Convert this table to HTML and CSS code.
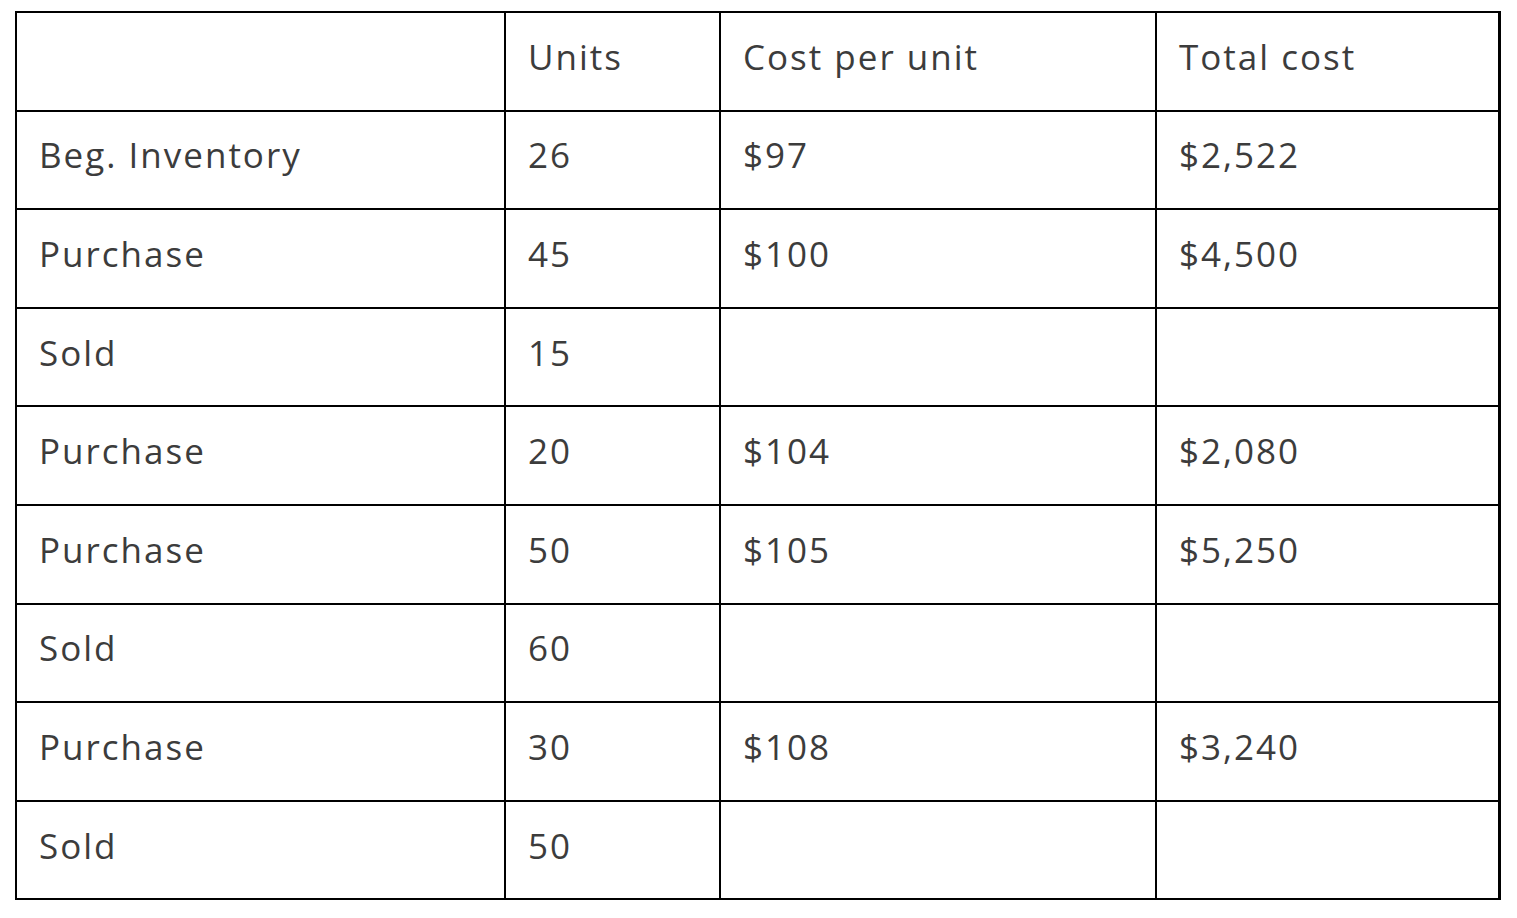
FILE: index.html
```html
<!DOCTYPE html>
<html>
<head>
<meta charset="utf-8">
<link rel="stylesheet" href="styles.css">
</head>
<body>
<table class="inv">
  <colgroup>
    <col class="c1"><col class="c2"><col class="c3"><col class="c4">
  </colgroup>
  <tr><td></td><td>Units</td><td>Cost per unit</td><td>Total cost</td></tr>
  <tr><td>Beg. Inventory</td><td>26</td><td>$97</td><td>$2,522</td></tr>
  <tr><td>Purchase</td><td>45</td><td>$100</td><td>$4,500</td></tr>
  <tr><td>Sold</td><td>15</td><td></td><td></td></tr>
  <tr><td>Purchase</td><td>20</td><td>$104</td><td>$2,080</td></tr>
  <tr><td>Purchase</td><td>50</td><td>$105</td><td>$5,250</td></tr>
  <tr><td>Sold</td><td>60</td><td></td><td></td></tr>
  <tr><td>Purchase</td><td>30</td><td>$108</td><td>$3,240</td></tr>
  <tr><td>Sold</td><td>50</td><td></td><td></td></tr>
</table>
</body>
</html>
```

FILE: styles.css
```css
html, body {
  margin: 0;
  padding: 0;
  background: #fff;
}
.inv {
  margin: 11px 0 0 15px;
  border-collapse: collapse;
  table-layout: fixed;
  width: 1483px;
  font-family: "Open Sans", Lato, sans-serif;
  font-size: 35px;
  letter-spacing: 2px;
  color: #3c3c3c;
}
.c1 { width: 489px; }
.c2 { width: 215px; }
.c3 { width: 436px; }
.c4 { width: 343px; }
.inv tr { height: 98.6px; }
.inv td {
  border: 2px solid #000;
  padding: 0 0 10px 22px;
  vertical-align: middle;
  white-space: nowrap;
}
.inv td:last-child {
  border-right-width: 3px;
}
```
